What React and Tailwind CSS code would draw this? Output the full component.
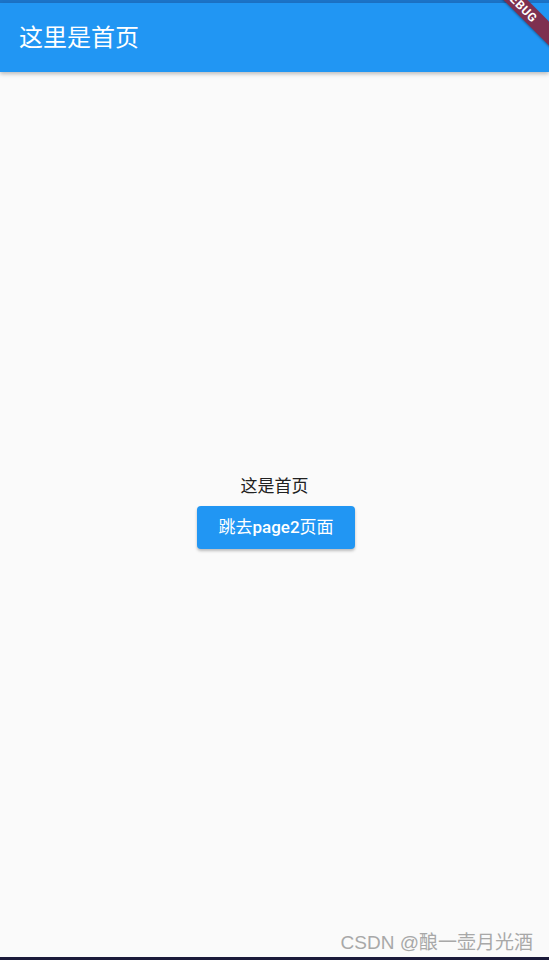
export default function App() {
  return (
    <div
      className="relative h-[960px] w-full overflow-hidden bg-[#fafafa] flex flex-col"
      style={{ fontFamily: 'Roboto, "Noto Sans CJK SC", sans-serif' }}
    >
      {/* status bar */}
      <div className="h-[3px] bg-[#1c74c8]" />

      {/* app bar */}
      <header className="h-[69px] bg-[#2196f3] flex items-center px-[19px] shadow-[0_2px_4px_rgba(0,0,0,0.25)] z-10">
        <h1 className="text-[24px] leading-none text-white font-normal">这里是首页</h1>
      </header>

      <main className="flex-1 flex flex-col items-center justify-center pb-[5px]">
        <p className="text-[17px] leading-[22px] text-[#212121]">这是首页</p>
        <button className="mt-[9px] ml-[3px] h-[43px] px-[21px] rounded-[4px] bg-[#2196f3] text-white text-[17px] font-normal shadow-[0_2px_3px_rgba(0,0,0,0.25)]">
          跳去<span className="font-medium">page2</span>页面
        </button>
      </main>

      <div className="h-[3px] bg-[#1b1a3a]" />

      {/* watermark */}
      <div
        className="absolute right-[16px] bottom-[8px] text-[19px] leading-none text-[#a8a8a8]"
        style={{ fontFamily: '"Liberation Sans", "Noto Sans CJK SC", sans-serif' }}
      >
        CSDN @酿一壶月光酒
      </div>

      {/* debug banner */}
      <div className="absolute left-[446px] top-[-3px] w-[150px] h-[17px] rotate-45 bg-[#7e3050] flex items-center justify-center shadow-[0_1px_2px_rgba(0,0,0,0.3)] z-20">
        <span className="text-[12px] font-bold text-white leading-none tracking-[0.5px]">DEBUG</span>
      </div>
    </div>
  )
}
